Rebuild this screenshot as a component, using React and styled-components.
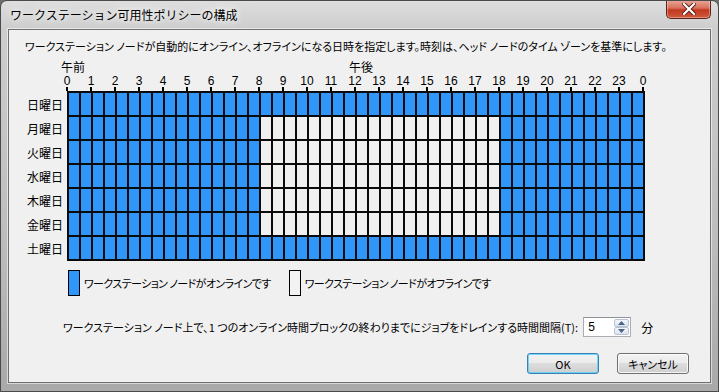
import React from 'react';
import styled, { createGlobalStyle } from 'styled-components';

const GlobalStyle = createGlobalStyle`
  html, body {
    margin: 0;
    padding: 0;
    background: #6d6d6d;
  }
  * {
    box-sizing: border-box;
  }
`;

const JP = `"Noto Sans CJK JP", "Liberation Sans", sans-serif`;

const Window = styled.div`
  width: 719px;
  height: 392px;
  display: flex;
  flex-direction: column;
  border: 1px solid #4a4a4a;
  border-radius: 7px 7px 0 0;
  background: linear-gradient(to bottom, #dedede 0, #cdcdcd 28px, #bdbdbd 60%, #a9a9a9 100%);
  font-family: ${JP};
  color: #000;
  overflow: hidden;
`;

const TitleBar = styled.div`
  height: 28px;
  flex: none;
  display: flex;
  align-items: flex-start;
  padding-left: 9px;
`;

const Title = styled.div`
  align-self: center;
  font-size: 12px;
  line-height: 16px;
  text-shadow: 0 0 6px #fff, 0 0 10px rgba(255, 255, 255, 0.9);
`;

const CloseButton = styled.div`
  margin-left: auto;
  margin-right: 7px;
  margin-top: -1px;
  width: 45px;
  height: 19px;
  border: 1px solid #5e2119;
  border-top: none;
  border-radius: 0 0 5px 5px;
  background: linear-gradient(to bottom, #e9a99b 0, #d8705c 45%, #c2371f 55%, #cf5a3c 100%);
  box-shadow: inset 0 0 0 1px rgba(255, 255, 255, 0.35);
  display: flex;
  align-items: center;
  justify-content: center;
`;

const Client = styled.div`
  flex: 1;
  margin: 0 7px 8px 7px;
  border: 1px solid #6f6f6f;
  box-shadow: 0 0 0 1px rgba(255, 255, 255, 0.55);
  background: #f0f0f0;
  display: flex;
  flex-direction: column;
  font-size: 11px;
  font-feature-settings: "palt";
`;

const Description = styled.div`
  margin-top: 8px;
  padding-left: 16px;
  line-height: 16px;
  white-space: nowrap;
`;

const Schedule = styled.div`
  margin-top: 6px;
  display: grid;
  grid-template-columns: 54px auto;
  column-gap: 4px;
  align-items: end;
`;

const Header = styled.div`
  display: flex;
  flex-direction: column;
`;

const Period = styled.div`
  display: grid;
  grid-template-columns: 288px 288px;
  height: 15px;
  line-height: 13px;
  font-size: 12px;
  font-feature-settings: normal;
  span {
    margin-left: -6px;
  }
`;

const HourRow = styled.div`
  display: grid;
  grid-template-columns: repeat(25, 24px);
  margin-left: -12px;
  height: 16px;
`;

const HourLabel = styled.div`
  position: relative;
  text-align: center;
  font-family: "Liberation Sans", sans-serif;
  font-size: 12px;
  line-height: 12px;
  &::after {
    content: '';
    position: absolute;
    left: 11px;
    bottom: 0;
    width: 2px;
    height: 4px;
    background: #000;
  }
`;

const DayColumn = styled.div`
  display: flex;
  flex-direction: column;
  padding-top: 1px;
`;

const DayLabel = styled.div`
  height: 24px;
  line-height: 24px;
  text-align: right;
  font-size: 12px;
  font-feature-settings: normal;
`;

const Cells = styled.div`
  display: grid;
  grid-template-columns: repeat(48, 10px);
  grid-auto-rows: 22px;
  gap: 2px;
  padding: 2px;
  background: #0b0b0b;
  width: max-content;
`;

const Cell = styled.div`
  background: ${(p) => (p.$offline ? '#f0f0f0' : '#3196fa')};
`;

const Legend = styled.div`
  margin-top: 9px;
  padding-left: 59px;
  display: flex;
  align-items: center;
  gap: 18px;
`;

const LegendItem = styled.div`
  display: flex;
  align-items: center;
  gap: 4px;
  letter-spacing: -0.6px;
`;

const Swatch = styled.div`
  width: 12px;
  height: 26px;
  border: 1px solid #000;
  background: ${(p) => (p.$offline ? '#f3f3f3' : '#3196fa')};
`;

const IntervalRow = styled.div`
  margin-top: 21px;
  padding-left: 54px;
  height: 20px;
  display: flex;
  align-items: center;
`;

const SpinBox = styled.div`
  margin-left: 5px;
  width: 48px;
  height: 20px;
  border: 1px solid #abadb3;
  border-top-color: #8f929a;
  background: #fff;
  display: flex;
  align-items: center;
  padding: 1px;
`;

const SpinValue = styled.div`
  flex: 1;
  padding-left: 3px;
  font-family: "Liberation Sans", sans-serif;
  font-size: 12px;
`;

const SpinButtons = styled.div`
  width: 15px;
  height: 16px;
  display: flex;
  flex-direction: column;
`;

const SpinButton = styled.div`
  flex: 1;
  border: 1px solid #b8c4d4;
  border-radius: 2px;
  background: linear-gradient(to bottom, #f4f7fb, #dbe3ee);
  display: flex;
  align-items: center;
  justify-content: center;
`;

const Unit = styled.div`
  margin-left: 10px;
  font-size: 12px;
  font-feature-settings: normal;
`;

const ButtonRow = styled.div`
  margin-top: 16px;
  padding-right: 21px;
  display: flex;
  justify-content: flex-end;
  gap: 18px;
`;

const Button = styled.div`
  width: 72px;
  height: 21px;
  border-radius: 3px;
  border: 1px solid ${(p) => (p.$default ? '#3c7fb1' : '#707070')};
  background: linear-gradient(to bottom, #f2f2f2 0, #ebebeb 50%, #dddddd 50%, #cfcfcf 100%);
  box-shadow: inset 0 0 0 1px ${(p) => (p.$default ? 'rgba(72, 208, 255, 0.75)' : 'rgba(255, 255, 255, 0.8)')};
  display: flex;
  align-items: center;
  justify-content: center;
  font-size: 11px;
`;

const days = ['日曜日', '月曜日', '火曜日', '水曜日', '木曜日', '金曜日', '土曜日'];
const hours = [...Array(24).keys(), 0];

function isOffline(day, slot) {
  return day >= 1 && day <= 5 && slot >= 16 && slot < 36;
}

function Arrow({ up }) {
  return (
    <svg width="7" height="4" viewBox="0 0 7 4">
      <path d={up ? 'M0 4 L3.5 0 L7 4 Z' : 'M0 0 L3.5 4 L7 0 Z'} fill="#4d6185" />
    </svg>
  );
}

export default function App() {
  return (
    <>
      <GlobalStyle />
      <Window>
        <TitleBar>
          <Title>ワークステーション可用性ポリシーの構成</Title>
          <CloseButton>
            <svg width="14" height="12" viewBox="0 0 14 12">
              <path d="M2 1 L12 11 M12 1 L2 11" stroke="#5a1a12" strokeWidth="4" strokeLinecap="square" />
              <path d="M2 1 L12 11 M12 1 L2 11" stroke="#fff" strokeWidth="2.2" strokeLinecap="square" />
            </svg>
          </CloseButton>
        </TitleBar>
        <Client>
          <Description>
            ワークステーション ノードが自動的にオンライン、オフラインになる日時を指定します。時刻は、ヘッド ノードのタイム ゾーンを基準にします。
          </Description>
          <Schedule>
            <div />
            <Header>
              <Period>
                <span>午前</span>
                <span>午後</span>
              </Period>
              <HourRow>
                {hours.map((h, i) => (
                  <HourLabel key={i}>{h}</HourLabel>
                ))}
              </HourRow>
            </Header>
            <DayColumn>
              {days.map((d) => (
                <DayLabel key={d}>{d}</DayLabel>
              ))}
            </DayColumn>
            <Cells>
              {days.map((d, day) =>
                Array.from({ length: 48 }, (_, slot) => (
                  <Cell key={`${day}-${slot}`} $offline={isOffline(day, slot)} />
                ))
              )}
            </Cells>
          </Schedule>
          <Legend>
            <LegendItem>
              <Swatch />
              <span>ワークステーション ノードがオンラインです</span>
            </LegendItem>
            <LegendItem>
              <Swatch $offline />
              <span>ワークステーション ノードがオフラインです</span>
            </LegendItem>
          </Legend>
          <IntervalRow>
            <span>ワークステーション ノード上で、1 つのオンライン時間ブロックの終わりまでにジョブをドレインする時間間隔(T):</span>
            <SpinBox>
              <SpinValue>5</SpinValue>
              <SpinButtons>
                <SpinButton><Arrow up /></SpinButton>
                <SpinButton><Arrow /></SpinButton>
              </SpinButtons>
            </SpinBox>
            <Unit>分</Unit>
          </IntervalRow>
          <ButtonRow>
            <Button $default>OK</Button>
            <Button>キャンセル</Button>
          </ButtonRow>
        </Client>
      </Window>
    </>
  );
}
